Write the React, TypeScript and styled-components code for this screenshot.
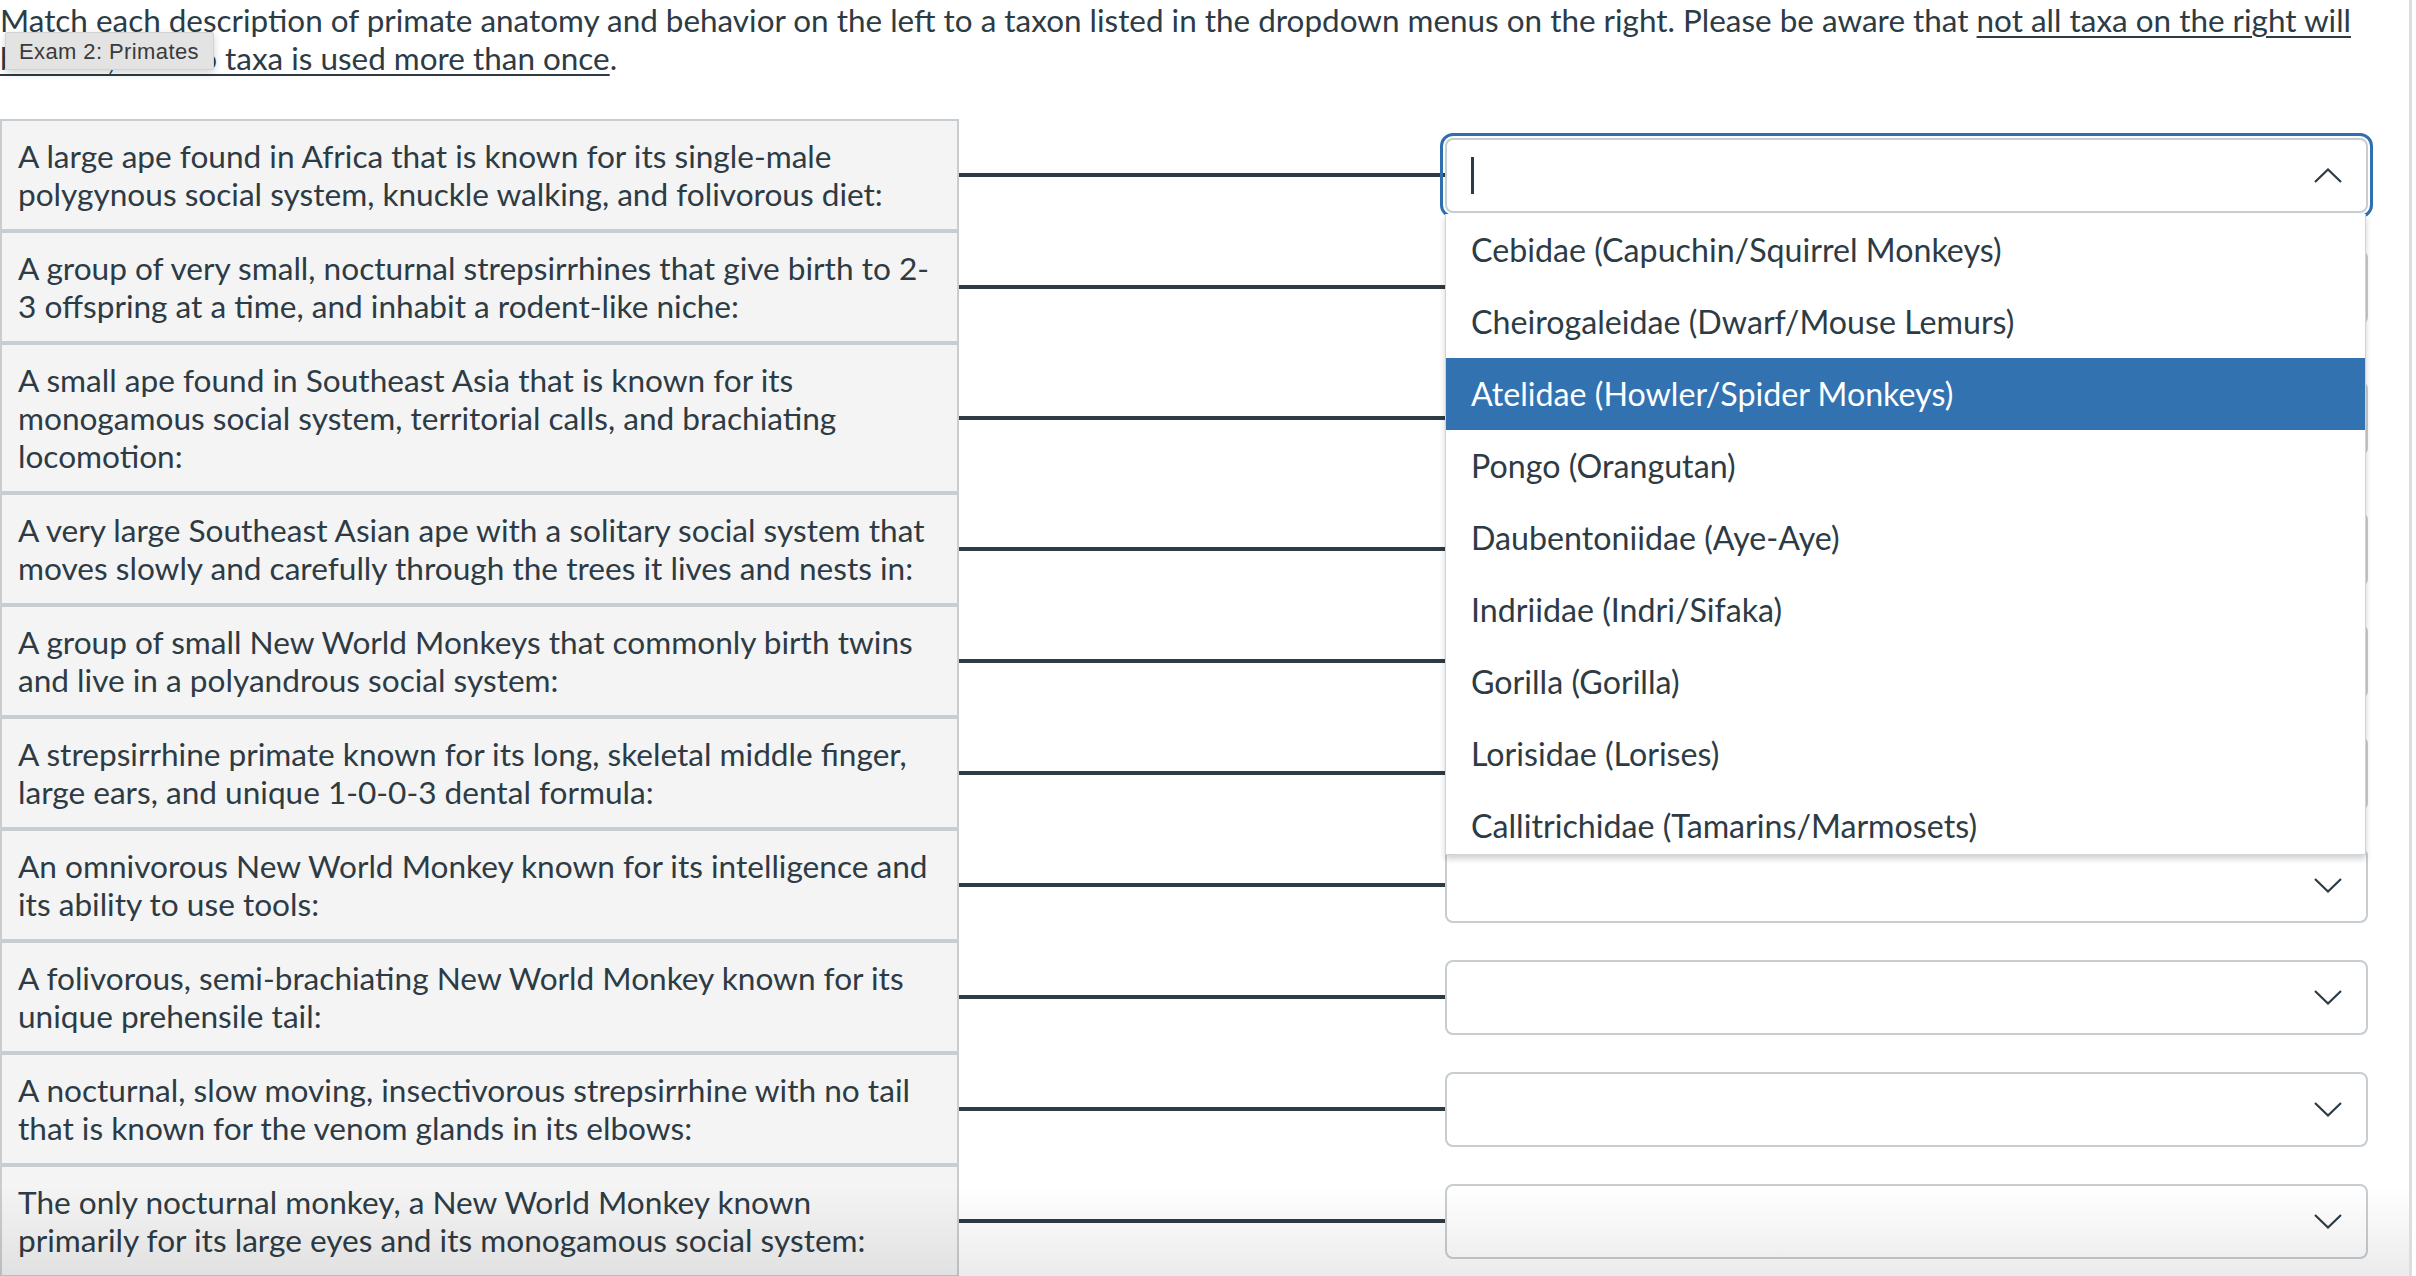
import React from 'react';
import styled, {createGlobalStyle, css} from 'styled-components';

const GlobalStyle = createGlobalStyle`
    html, body {
        margin: 0;
        padding: 0;
        background: #fff;
        overflow: hidden;
    }
    body {
        font-family: Lato, "Open Sans", sans-serif;
        color: #2d3b45;
    }
`

const questions: string[] = [
    'A large ape found in Africa that is known for its single-male polygynous social system, knuckle walking, and folivorous diet:',
    'A group of very small, nocturnal strepsirrhines that give birth to 2-3 offspring at a time, and inhabit a rodent-like niche:',
    'A small ape found in Southeast Asia that is known for its monogamous social system, territorial calls, and brachiating locomotion:',
    'A very large Southeast Asian ape with a solitary social system that moves slowly and carefully through the trees it lives and nests in:',
    'A group of small New World Monkeys that commonly birth twins and live in a polyandrous social system:',
    'A strepsirrhine primate known for its long, skeletal middle finger, large ears, and unique 1-0-0-3 dental formula:',
    'An omnivorous New World Monkey known for its intelligence and its ability to use tools:',
    'A folivorous, semi-brachiating New World Monkey known for its unique prehensile tail:',
    'A nocturnal, slow moving, insectivorous strepsirrhine with no tail that is known for the venom glands in its elbows:',
    'The only nocturnal monkey, a New World Monkey known primarily for its large eyes and its monogamous social system:',
]

const options: string[] = [
    'Cebidae (Capuchin/Squirrel Monkeys)',
    'Cheirogaleidae (Dwarf/Mouse Lemurs)',
    'Atelidae (Howler/Spider Monkeys)',
    'Pongo (Orangutan)',
    'Daubentoniidae (Aye-Aye)',
    'Indriidae (Indri/Sifaka)',
    'Gorilla (Gorilla)',
    'Lorisidae (Lorises)',
    'Callitrichidae (Tamarins/Marmosets)',
]

const Chevron = ({up}: { up?: boolean }) => (
    <svg width="28" height="15" viewBox="0 0 28 15" fill="none">
        <polyline
            points={up ? '1,14 14,1.5 27,14' : '1,1 14,13.5 27,1'}
            stroke="#2d3b45"
            strokeWidth="2.2"
            strokeLinejoin="miter"
        />
    </svg>
)

export default function App() {
    return (
        <Page>
            <GlobalStyle/>
            <Instructions>
                Match each description of primate anatomy and behavior on the left to a taxon listed in the
                dropdown menus on the right. Please be aware that <Underlined>not all taxa on the right will be
                used, and no taxa is used more than once</Underlined>.
            </Instructions>
            <Tooltip>Exam 2: Primates</Tooltip>
            <MatchList>
                {questions.map((q, i) => (
                    <MatchRow key={i}>
                        <Description>{q}</Description>
                        <Connector/>
                        <Select $open={i === 0}>
                            {i === 0 ? <TextCursor/> : <span/>}
                            <Chevron up={i === 0}/>
                            {i === 0 && (
                                <Menu>
                                    {options.map((o, j) => (
                                        <MenuItem key={o} $active={j === 2}>{o}</MenuItem>
                                    ))}
                                </Menu>
                            )}
                        </Select>
                    </MatchRow>
                ))}
            </MatchList>
            <BottomFade/>
        </Page>
    )
}

const Page = styled.div`
    position: relative;
    box-sizing: border-box;
    width: 2412px;
    height: 1276px;
    overflow: hidden;
    border-right: 3px solid #dcdddf;
`

const Instructions = styled.p`
    margin: 0 0 42px;
    padding-top: 1px;
    width: 2368px;
    font-size: 31.45px;
    line-height: 38px;
`

const Underlined = styled.span`
    text-decoration: underline;
    text-decoration-thickness: 2px;
    text-underline-offset: 4px;
`

const Tooltip = styled.div`
    position: absolute;
    left: 5px;
    top: 32px;
    padding: 5px 14px 4px 13px;
    font-family: "Liberation Sans", Arial, sans-serif;
    font-size: 22px;
    line-height: 27px;
    letter-spacing: 0.4px;
    color: #3a3a3a;
    background: #e3e3e3;
    border: 1px solid #d2d2d2;
    border-radius: 2px;
    box-shadow: 0 3px 8px rgba(0, 0, 0, 0.18);
`

const MatchList = styled.div`
    display: flex;
    flex-direction: column;
`

const MatchRow = styled.div`
    display: grid;
    grid-template-columns: 959px 486px 923px;
    align-items: center;
`

const Description = styled.div`
    align-self: stretch;
    box-sizing: border-box;
    background: #f4f4f4;
    border: 2px solid #c7cdd1;
    padding: 16px 23px 16px 16px;
    font-size: 31.6px;
    line-height: 38px;
`

const Connector = styled.div`
    height: 4px;
    background: #2d3b45;
`

const Select = styled.div<{ $open?: boolean }>`
    box-sizing: border-box;
    height: 75px;
    padding: 0 24px;
    display: flex;
    align-items: center;
    justify-content: space-between;
    background: #fff;
    border: 2px solid #c7cdd1;
    border-radius: 8px;
    ${p => p.$open && css`
        position: relative;
        z-index: 2;
        outline: 3px solid #2f6fb0;
        outline-offset: 2px;
    `}
`

const TextCursor = styled.span`
    width: 3px;
    height: 37px;
    background: #2d3b45;
`

const Menu = styled.ul`
    position: absolute;
    top: calc(100% + 3px);
    left: -2px;
    right: 0;
    margin: 0;
    padding: 0;
    list-style: none;
    max-height: 640px;
    overflow: hidden;
    background: #fff;
    border: 1px solid #cfd4d8;
    border-top: none;
    box-shadow: 0 4px 6px rgba(0, 0, 0, 0.18);
`

const MenuItem = styled.li<{ $active?: boolean }>`
    padding: 17px 25px;
    font-size: 32.2px;
    line-height: 38px;
    color: #2d3b45;
    ${p => p.$active && css`
        background: #3272b1;
        color: #fff;
    `}
`

const BottomFade = styled.div`
    position: absolute;
    left: 0;
    right: 0;
    bottom: 0;
    height: 90px;
    pointer-events: none;
    background: linear-gradient(to bottom, rgba(0, 0, 0, 0), rgba(0, 0, 0, 0.08));
`
